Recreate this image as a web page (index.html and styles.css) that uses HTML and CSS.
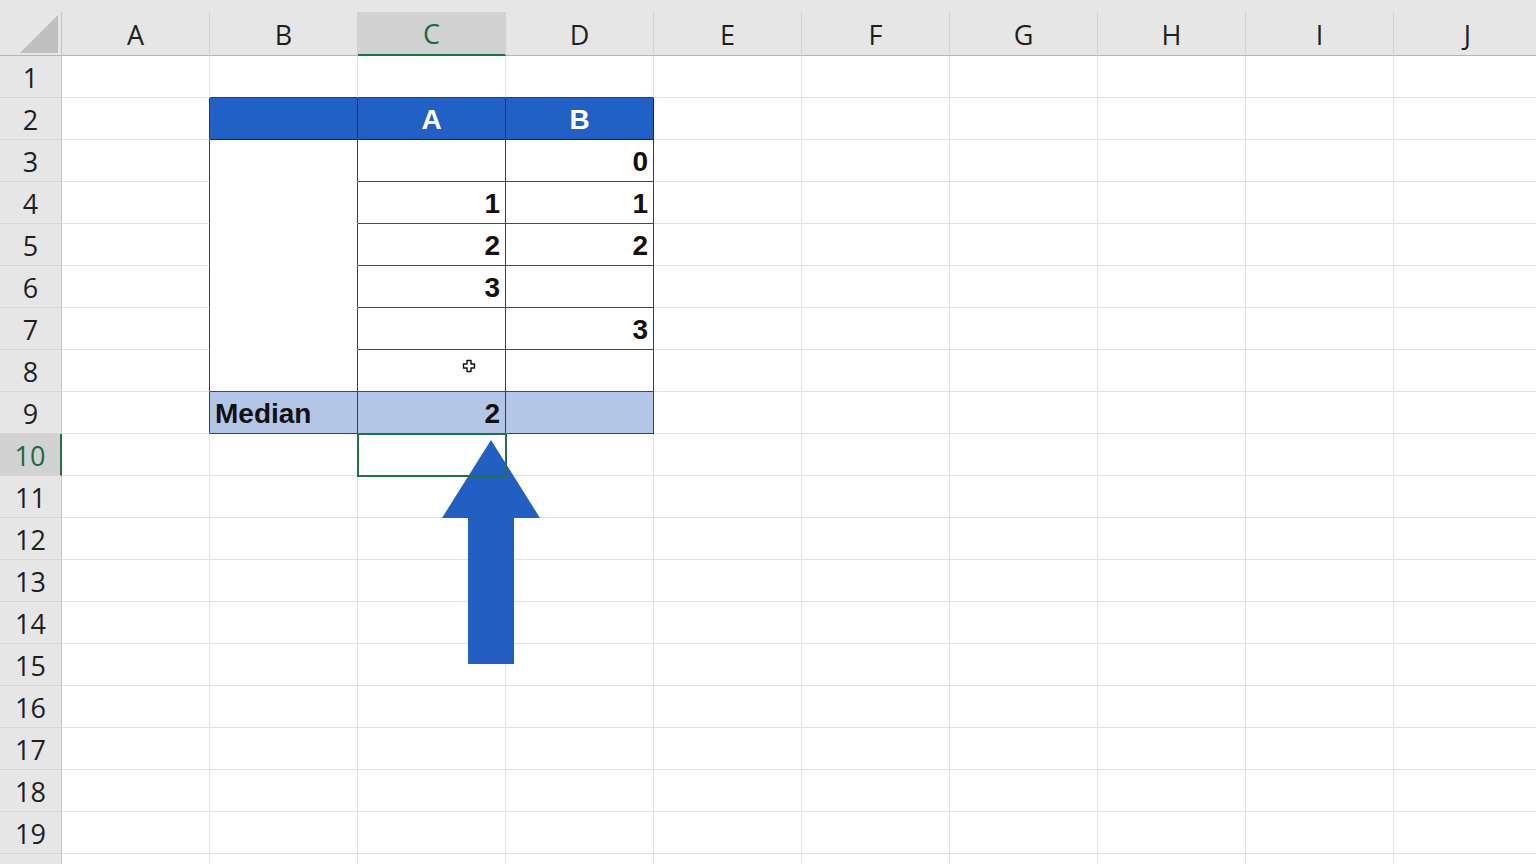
FILE: index.html
```html
<!DOCTYPE html>
<html lang="en">
<head>
    <meta charset="UTF-8">
    <title>Median - Sheet</title>
    <link rel="stylesheet" href="styles.css">
</head>
<body>
    <div class="workbook">
        <div class="top-strip"></div>

        <div class="sheet">
            <!-- column headers -->
            <div class="corner"><span class="corner-tri"></span></div>
            <div class="hd">A</div><div class="hd">B</div><div class="hd sel">C</div><div class="hd">D</div><div class="hd">E</div>
            <div class="hd">F</div><div class="hd">G</div><div class="hd">H</div><div class="hd">I</div><div class="hd">J</div>

            <div class="rh">1</div>
            <div class="c"></div><div class="c top"></div><div class="c top"></div><div class="c top"></div>
            <div class="c"></div><div class="c"></div><div class="c"></div><div class="c"></div><div class="c"></div><div class="c"></div>

            <div class="rh">2</div>
            <div class="c lt"></div><div class="c th"></div><div class="c th">A</div><div class="c th">B</div>
            <div class="c"></div><div class="c"></div><div class="c"></div><div class="c"></div><div class="c"></div><div class="c"></div>

            <div class="rh">3</div>
            <div class="c lt"></div><div class="c tb open"></div><div class="c tb num"></div><div class="c tb num">0</div>
            <div class="c"></div><div class="c"></div><div class="c"></div><div class="c"></div><div class="c"></div><div class="c"></div>

            <div class="rh">4</div>
            <div class="c lt"></div><div class="c tb open"></div><div class="c tb num">1</div><div class="c tb num">1</div>
            <div class="c"></div><div class="c"></div><div class="c"></div><div class="c"></div><div class="c"></div><div class="c"></div>

            <div class="rh">5</div>
            <div class="c lt"></div><div class="c tb open"></div><div class="c tb num">2</div><div class="c tb num">2</div>
            <div class="c"></div><div class="c"></div><div class="c"></div><div class="c"></div><div class="c"></div><div class="c"></div>

            <div class="rh">6</div>
            <div class="c lt"></div><div class="c tb open"></div><div class="c tb num">3</div><div class="c tb num"></div>
            <div class="c"></div><div class="c"></div><div class="c"></div><div class="c"></div><div class="c"></div><div class="c"></div>

            <div class="rh">7</div>
            <div class="c lt"></div><div class="c tb open"></div><div class="c tb num"></div><div class="c tb num">3</div>
            <div class="c"></div><div class="c"></div><div class="c"></div><div class="c"></div><div class="c"></div><div class="c"></div>

            <div class="rh">8</div>
            <div class="c lt"></div><div class="c tb"></div><div class="c tb num"></div><div class="c tb num"></div>
            <div class="c"></div><div class="c"></div><div class="c"></div><div class="c"></div><div class="c"></div><div class="c"></div>

            <div class="rh">9</div>
            <div class="c lt"></div><div class="c tb md">Median</div><div class="c tb md num">2</div><div class="c tb md"></div>
            <div class="c"></div><div class="c"></div><div class="c"></div><div class="c"></div><div class="c"></div><div class="c"></div>

            <div class="rh sel">10</div>
            <div class="c"></div><div class="c"></div><div class="c pick"></div><div class="c"></div>
            <div class="c"></div><div class="c"></div><div class="c"></div><div class="c"></div><div class="c"></div><div class="c"></div>

            <div class="rh">11</div>
            <div class="c"></div><div class="c"></div><div class="c"></div><div class="c"></div><div class="c"></div>
            <div class="c"></div><div class="c"></div><div class="c"></div><div class="c"></div><div class="c"></div>

            <div class="rh">12</div>
            <div class="c"></div><div class="c"></div><div class="c"></div><div class="c"></div><div class="c"></div>
            <div class="c"></div><div class="c"></div><div class="c"></div><div class="c"></div><div class="c"></div>

            <div class="rh">13</div>
            <div class="c"></div><div class="c"></div><div class="c"></div><div class="c"></div><div class="c"></div>
            <div class="c"></div><div class="c"></div><div class="c"></div><div class="c"></div><div class="c"></div>

            <div class="rh">14</div>
            <div class="c"></div><div class="c"></div><div class="c"></div><div class="c"></div><div class="c"></div>
            <div class="c"></div><div class="c"></div><div class="c"></div><div class="c"></div><div class="c"></div>

            <div class="rh">15</div>
            <div class="c"></div><div class="c"></div><div class="c"></div><div class="c"></div><div class="c"></div>
            <div class="c"></div><div class="c"></div><div class="c"></div><div class="c"></div><div class="c"></div>

            <div class="rh">16</div>
            <div class="c"></div><div class="c"></div><div class="c"></div><div class="c"></div><div class="c"></div>
            <div class="c"></div><div class="c"></div><div class="c"></div><div class="c"></div><div class="c"></div>

            <div class="rh">17</div>
            <div class="c"></div><div class="c"></div><div class="c"></div><div class="c"></div><div class="c"></div>
            <div class="c"></div><div class="c"></div><div class="c"></div><div class="c"></div><div class="c"></div>

            <div class="rh">18</div>
            <div class="c"></div><div class="c"></div><div class="c"></div><div class="c"></div><div class="c"></div>
            <div class="c"></div><div class="c"></div><div class="c"></div><div class="c"></div><div class="c"></div>

            <div class="rh">19</div>
            <div class="c"></div><div class="c"></div><div class="c"></div><div class="c"></div><div class="c"></div>
            <div class="c"></div><div class="c"></div><div class="c"></div><div class="c"></div><div class="c"></div>

            <!-- row 20 only peeks in at the bottom edge -->
            <div class="rh"></div>
            <div class="c"></div><div class="c"></div><div class="c"></div><div class="c"></div><div class="c"></div>
            <div class="c"></div><div class="c"></div><div class="c"></div><div class="c"></div><div class="c"></div>
        </div>

        <!-- overlays: mouse cursor and callout arrow -->
        <svg class="cursor" width="14" height="14" viewBox="0 0 14 14">
            <path d="M5 1.5h4v3.5h3.5v4H9v3.5H5V9H1.5V5H5z" fill="#fff" stroke="#111" stroke-width="1.4" stroke-linejoin="round"/>
        </svg>

        <svg class="arrow" width="100" height="226" viewBox="0 0 100 226">
            <polygon points="49,0 98,78 72,78 72,224 26,224 26,78 0,78" fill="#225fc3"/>
        </svg>
    </div>
</body>
</html>
```

FILE: styles.css
```css
* {
    margin: 0;
    padding: 0;
    box-sizing: border-box;
}

body {
    width: 1536px;
    height: 864px;
    overflow: hidden;
    background: #ffffff;
    font-family: 'Open Sans', 'Noto Sans', sans-serif;
}

.workbook {
    position: relative;
    width: 1536px;
    height: 864px;
    overflow: hidden;
}

.top-strip {
    height: 12px;
    background: #e6e6e6;
}

.sheet {
    display: grid;
    grid-template-columns: 62px repeat(10, 148px);
    grid-template-rows: 44px;
    grid-auto-rows: 42px;
    width: 1542px;
}

/* headers */
.corner {
    background: #e6e6e6;
    border-right: 1px solid #c4c4c4;
    border-bottom: 1px solid #b4b4b4;
    position: relative;
}

.corner-tri {
    position: absolute;
    right: 3px;
    bottom: 2px;
    width: 0;
    height: 0;
    border-left: 38px solid transparent;
    border-bottom: 38px solid #bfbfbf;
}

.hd {
    background: #e6e6e6;
    border-right: 1px solid #d2d2d2;
    border-bottom: 1px solid #b4b4b4;
    display: flex;
    align-items: center;
    justify-content: center;
    font-size: 27px;
    color: #1f1f1f;
    padding-top: 1px;
}

.hd.sel {
    background: #d2d2d2;
    color: #1d6b41;
    border-bottom: 2px solid #217346;
}

.rh {
    background: #e6e6e6;
    border-right: 1px solid #c4c4c4;
    border-bottom: 1px solid #d6d6d6;
    display: flex;
    align-items: center;
    justify-content: center;
    font-size: 27px;
    color: #1f1f1f;
    padding-top: 1px;
}

.rh.sel {
    background: #d2d2d2;
    color: #1d6b41;
    border-right: 2px solid #217346;
}

/* cells */
.c {
    border-right: 1px solid #e2e2e2;
    border-bottom: 1px solid #e2e2e2;
    display: flex;
    align-items: center;
    padding: 2px 5px 0;
    font-family: 'Liberation Sans', Arial, sans-serif;
    font-weight: 700;
    font-size: 28px;
    color: #111;
}

.c.top {
    border-bottom-color: #3e3e3e;
}

.c.lt {
    border-right-color: #3e3e3e;
}

.c.th {
    background: #2160c4;
    color: #fff;
    justify-content: center;
    border-right-color: #2a2a2a;
    border-bottom-color: #2a2a2a;
}

.c.tb {
    border-right-color: #3e3e3e;
    border-bottom-color: #4a4a4a;
}

.c.tb.open {
    border-bottom-color: #ffffff;
}

.c.num {
    justify-content: flex-end;
}

.c.md {
    background: #b4c6e7;
    border-bottom-color: #3e3e3e;
}

.c.pick {
    outline: 2px solid #217346;
    outline-offset: -1px;
    position: relative;
    z-index: 1;
}

/* overlays */
.cursor {
    position: absolute;
    left: 462px;
    top: 359px;
}

.arrow {
    position: absolute;
    left: 442px;
    top: 440px;
}
```
